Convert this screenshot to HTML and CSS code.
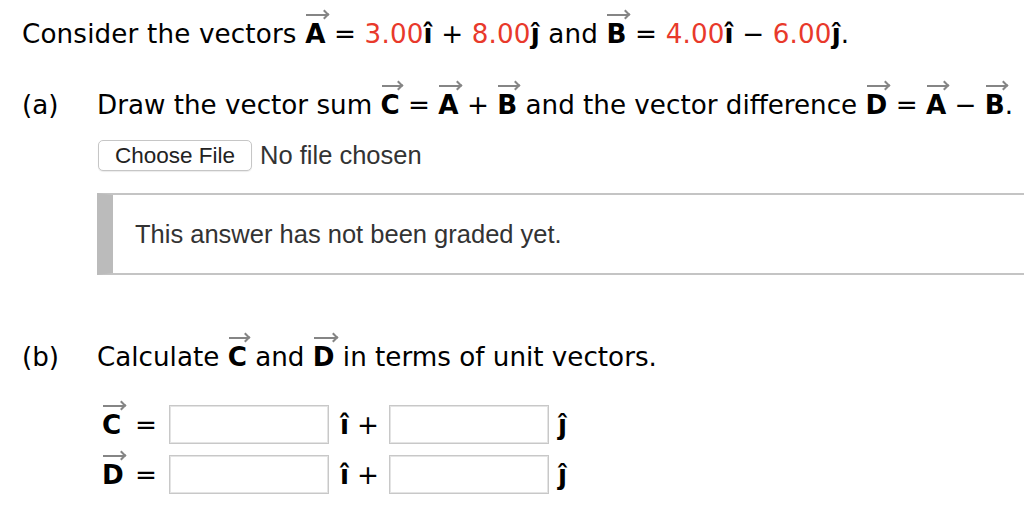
FILE: index.html
```html
<!DOCTYPE html>
<html lang="en">
<head>
    <meta charset="UTF-8">
    <title>Vector Sum and Difference</title>
    <link rel="stylesheet" href="styles.css">
</head>
<body>
    <p class="intro">
        Consider the vectors <span class="vec">A</span> = <span class="num">3.00</span><b>î</b> + <span class="num">8.00</span><b>ĵ</b>
        and <span class="vec">B</span> = <span class="num">4.00</span><b>î</b> − <span class="num">6.00</span><b>ĵ</b>.
    </p>

    <div class="part part-a">
        <span class="part-label">(a)</span>
        <div class="part-body">
            <p class="prompt">Draw the vector sum <span class="vec">C</span> = <span class="vec">A</span> + <span class="vec">B</span> and the vector difference <span class="vec">D</span> = <span class="vec">A</span> − <span class="vec">B</span>.</p>
            <div class="upload">
                <button type="button" class="file-btn">Choose File</button>
                <span class="file-name">No file chosen</span>
            </div>
            <div class="grade-box">This answer has not been graded yet.</div>
        </div>
    </div>

    <div class="part part-b">
        <span class="part-label">(b)</span>
        <div class="part-body">
            <p class="prompt">Calculate <span class="vec">C</span> and <span class="vec">D</span> in terms of unit vectors.</p>
            <div class="answer-row">
                <span class="vec row-label">C</span>
                <span class="eq">=</span>
                <input type="text" class="answer-input">
                <b class="unit-i">î</b>
                <span class="plus">+</span>
                <input type="text" class="answer-input">
                <b class="unit-j">ĵ</b>
            </div>
            <div class="answer-row">
                <span class="vec row-label">D</span>
                <span class="eq">=</span>
                <input type="text" class="answer-input">
                <b class="unit-i">î</b>
                <span class="plus">+</span>
                <input type="text" class="answer-input">
                <b class="unit-j">ĵ</b>
            </div>
        </div>
    </div>
</body>
</html>
```

FILE: styles.css
```css
body {
    margin: 0;
    font-family: "DejaVu Sans", Verdana, sans-serif;
    font-size: 26.2px;
    color: #000;
    background: #fff;
    overflow: hidden;
}
p {
    margin: 0;
}
.intro {
    padding: 17px 0 0 22px;
    line-height: 34px;
    letter-spacing: 0.15px;
}
.num {
    color: #e8392b;
}
.vec {
    position: relative;
    font-weight: bold;
}
.vec::before {
    content: "";
    position: absolute;
    left: 1px;
    right: -2px;
    top: -5px;
    border-top: 2px solid #858585;
}
.vec::after {
    content: "";
    position: absolute;
    right: -2px;
    top: -8px;
    width: 7px;
    height: 7px;
    box-sizing: border-box;
    border-top: 2px solid #858585;
    border-right: 2px solid #858585;
    transform: rotate(45deg);
}
.part {
    display: grid;
    grid-template-columns: 75px 1fr;
    padding-left: 22px;
}
.part-label,
.prompt {
    line-height: 34px;
}
.part-a {
    margin-top: 37px;
}
.upload {
    display: flex;
    align-items: center;
    margin: 18px 0 0 1px;
    font-family: "Liberation Sans", Arial, sans-serif;
}
.file-btn {
    height: 31px;
    padding: 0 16px;
    font-family: "Liberation Sans", Arial, sans-serif;
    font-size: 22.5px;
    color: #222;
    background: #fff;
    border: 1px solid #c6c6c6;
    border-radius: 5px;
    box-shadow: 0 1px 1px rgba(0,0,0,0.08);
}
.file-name {
    margin-left: 8px;
    font-size: 25.5px;
    color: #333;
}
.grade-box {
    display: flex;
    align-items: center;
    height: 78px;
    margin-top: 22px;
    padding-left: 22px;
    border-left: 16px solid #bbbbbb;
    border-top: 2px solid #c4c4c4;
    border-bottom: 2px solid #c4c4c4;
    font-family: "Liberation Sans", Arial, sans-serif;
    font-size: 25.5px;
    color: #333;
}
.part-b {
    margin-top: 65px;
}
.part-b .prompt {
    margin-bottom: 31px;
}
.answer-row {
    display: flex;
    align-items: center;
    height: 39px;
    margin-bottom: 11px;
}
.row-label {
    display: inline-block;
    width: 21px;
    margin-left: 5px;
}
.eq {
    margin: 0 12px 0 12px;
}
.answer-input {
    width: 160px;
    height: 39px;
    box-sizing: border-box;
    margin: 0;
    padding: 0 6px;
    border: 1px solid #c8c8c8;
    box-shadow: inset 0 0 0 1px #e4e4e4;
    font-size: 20px;
    background: #fff;
}
.unit-i {
    margin-left: 11px;
}
.plus {
    margin: 0 10px 0 8px;
}
.unit-j {
    margin-left: 9px;
}
```
